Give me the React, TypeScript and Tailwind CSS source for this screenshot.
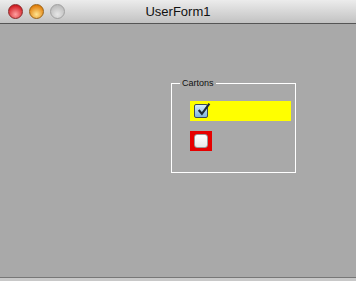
import React from 'react';

const Light = ({ from, to, ring }: { from: string; to: string; ring: string }) => (
  <span
    className="block h-[15px] w-[15px] rounded-full border"
    style={{ background: `radial-gradient(circle at 50% 72%, ${to} 0%, ${from} 78%)`, borderColor: ring }}
  />
);

export default function App() {
  return (
    <div className="flex h-[281px] w-[356px] flex-col bg-[#a9a9a9] font-['Liberation_Sans',sans-serif]">
      {/* title bar */}
      <div className="relative flex h-[24px] shrink-0 items-center border-b border-[#555] bg-gradient-to-b from-[#ececec] to-[#c2c2c2] px-[8px]">
        <div className="flex gap-[6px]">
          <Light from="#d01a20" to="#ffa0a0" ring="#8a2a2a" />
          <Light from="#e07c08" to="#ffe490" ring="#9a6418" />
          <Light from="#bcbcbc" to="#e6e6e6" ring="#a0a0a0" />
        </div>
        <span className="absolute left-0 right-0 text-center text-[13px] text-[#111]">UserForm1</span>
      </div>

      {/* form body */}
      <div className="flex-1 pl-[171px] pt-[59px]">
        <div className="relative h-[90px] w-[125px] border border-white">
          <span className="absolute left-[8px] top-[-6px] bg-[#a9a9a9] px-[2px] text-[9px] leading-[10px] text-[#111]">
            Cartons
          </span>
          <div className="ml-[18px] mt-[17px] flex h-[20px] w-[101px] items-center bg-[#ffff00] pl-[4px]">
            <span className="relative block h-[14px] w-[14px] rounded-[2px] border border-[#3a4a5a] bg-gradient-to-b from-[#d6ecfb] to-[#7fb4de]">
              <svg viewBox="0 0 14 14" className="absolute left-[1px] top-[-3px] h-[15px] w-[15px]">
                <path d="M2.5 7.5 L5.5 11 L12.5 1.5" fill="none" stroke="#1c2a36" strokeWidth="2" />
              </svg>
            </span>
          </div>
          <div className="ml-[18px] mt-[10px] flex h-[20px] w-[22px] items-center justify-center bg-[#e60000]">
            <span className="block h-[14px] w-[14px] rounded-[3px] border border-[#9a9a9a] bg-gradient-to-b from-white to-[#e8e8e8]" />
          </div>
        </div>
      </div>

      {/* bottom edge */}
      <div className="h-[4px] shrink-0 border-t border-[#777] bg-[#c8c8c8]" />
    </div>
  );
}
